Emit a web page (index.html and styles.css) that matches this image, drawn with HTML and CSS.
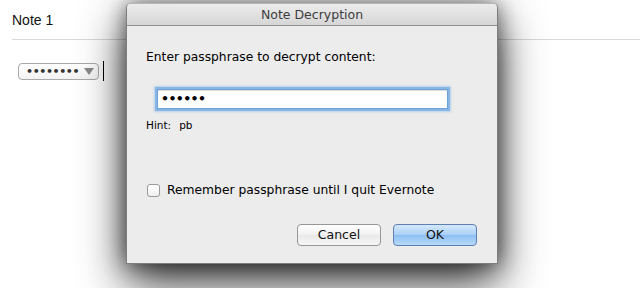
FILE: index.html
```html
<!DOCTYPE html>
<html>
<head>
<meta charset="utf-8">
<link rel="stylesheet" href="styles.css">
</head>
<body>
<div class="page">
  <div class="note-title">Note 1</div>
  <div class="note-body">
    <span class="pill"><span class="pill-dots">••••••••</span><svg class="pill-arrow" width="10" height="7" viewBox="0 0 10 7"><path d="M0 0H10L5 7Z" fill="#8a8a8a"/></svg></span>
    <span class="caret"></span>
  </div>
</div>
<div class="dialog">
  <div class="titlebar">Note Decryption</div>
  <div class="dlg-body">
    <div class="prompt">Enter passphrase to decrypt content:</div>
    <div class="field"><span class="field-dots">••••••</span></div>
    <div class="hint"><span>Hint:</span><span class="hint-val">pb</span></div>
    <label class="remember"><span class="check"></span><span>Remember passphrase until I quit Evernote</span></label>
    <div class="buttons">
      <span class="btn">Cancel</span>
      <span class="btn btn-ok">OK</span>
    </div>
  </div>
</div>
</body>
</html>
```
FILE: styles.css
```css
html, body {
  margin: 0;
  padding: 0;
}
body {
  width: 640px;
  height: 288px;
  overflow: hidden;
  background: #fff;
  position: relative;
  font-family: "DejaVu Sans", "Liberation Sans", sans-serif;
}
.page {
  padding-left: 12px;
}
.note-title {
  font-family: "Liberation Sans", Arial, sans-serif;
  font-size: 14px;
  color: #111;
  height: 39px;
  line-height: 40px;
  border-bottom: 1px solid #d9d9d9;
}
.note-body {
  display: flex;
  align-items: center;
  padding-top: 21px;
  padding-left: 6px;
}
.pill {
  display: flex;
  align-items: center;
  width: 79px;
  height: 15px;
  border: 1px solid #a9a9a9;
  border-radius: 4px;
  background: linear-gradient(#fff, #f3f3f3);
  box-sizing: content-box;
}
.pill-dots {
  font-size: 11px;
  font-weight: bold;
  letter-spacing: -0.4px;
  color: #333;
  margin-left: 7px;
  line-height: 15px;
}
.pill-arrow {
  margin-left: 5px;
}
.caret {
  width: 1px;
  height: 20px;
  background: #000;
  margin-left: 4px;
}
.dialog {
  position: absolute;
  left: 126px;
  top: 3px;
  width: 372px;
  height: 261px;
  box-sizing: border-box;
  border: 1px solid #7e7e7e;
  border-top-color: #b5b5b5;
  border-radius: 5px 5px 0 0;
  background: #ececec;
  box-shadow: 0 18px 46px rgba(0,0,0,0.82), 0 0 20px rgba(0,0,0,0.5);
  display: flex;
  flex-direction: column;
}
.titlebar {
  height: 21px;
  flex: none;
  border-bottom: 1px solid #8f8f8f;
  border-radius: 4px 4px 0 0;
  background: linear-gradient(#ececec, #d6d6d6);
  text-align: center;
  font-size: 12.5px;
  line-height: 22px;
  color: #3c3c3c;
}
.dlg-body {
  padding: 0 0 0 19px;
  display: flex;
  flex-direction: column;
  color: #000;
  font-size: 12.3px;
}
.prompt {
  margin-top: 23px;
  line-height: 16px;
}
.field {
  margin-top: 24px;
  margin-left: 11px;
  width: 289px;
  height: 18px;
  border: 1px solid #6fa3d8;
  background: #fff;
  box-shadow: 0 0 0 2px #86b5e6, 0 0 2px 3px rgba(134,181,230,0.5), inset 0 1px 1px rgba(0,0,0,0.15);
  display: flex;
  align-items: center;
}
.field-dots {
  font-size: 12.5px;
  font-weight: bold;
  letter-spacing: -0.6px;
  margin-left: 3px;
  line-height: 16px;
}
.hint {
  margin-top: 9px;
  font-size: 10.5px;
  line-height: 14px;
  display: flex;
}
.hint-val {
  margin-left: 8px;
}
.remember {
  margin-top: 50px;
  display: flex;
  align-items: center;
  line-height: 16px;
}
.check {
  width: 11px;
  height: 11px;
  border: 1px solid #9a9a9a;
  border-radius: 3px;
  background: linear-gradient(#fff, #f0f0f0);
  margin-left: 1px;
  margin-right: 7px;
}
.buttons {
  margin-top: 26px;
  display: flex;
  justify-content: flex-end;
  gap: 12px;
  padding-right: 20px;
}
.btn {
  width: 82px;
  height: 20px;
  box-sizing: content-box;
  border: 1px solid #979797;
  border-radius: 4px;
  background: linear-gradient(#ffffff, #f1f1f1 50%, #e9e9e9 51%, #f6f6f6);
  text-align: center;
  line-height: 20px;
  font-size: 12.5px;
  color: #111;
}
.btn-ok {
  border-color: #5d7fb3;
  background: linear-gradient(#d5e8fc, #a9cff6 50%, #8dbef2 51%, #b6daf9);
}
```
